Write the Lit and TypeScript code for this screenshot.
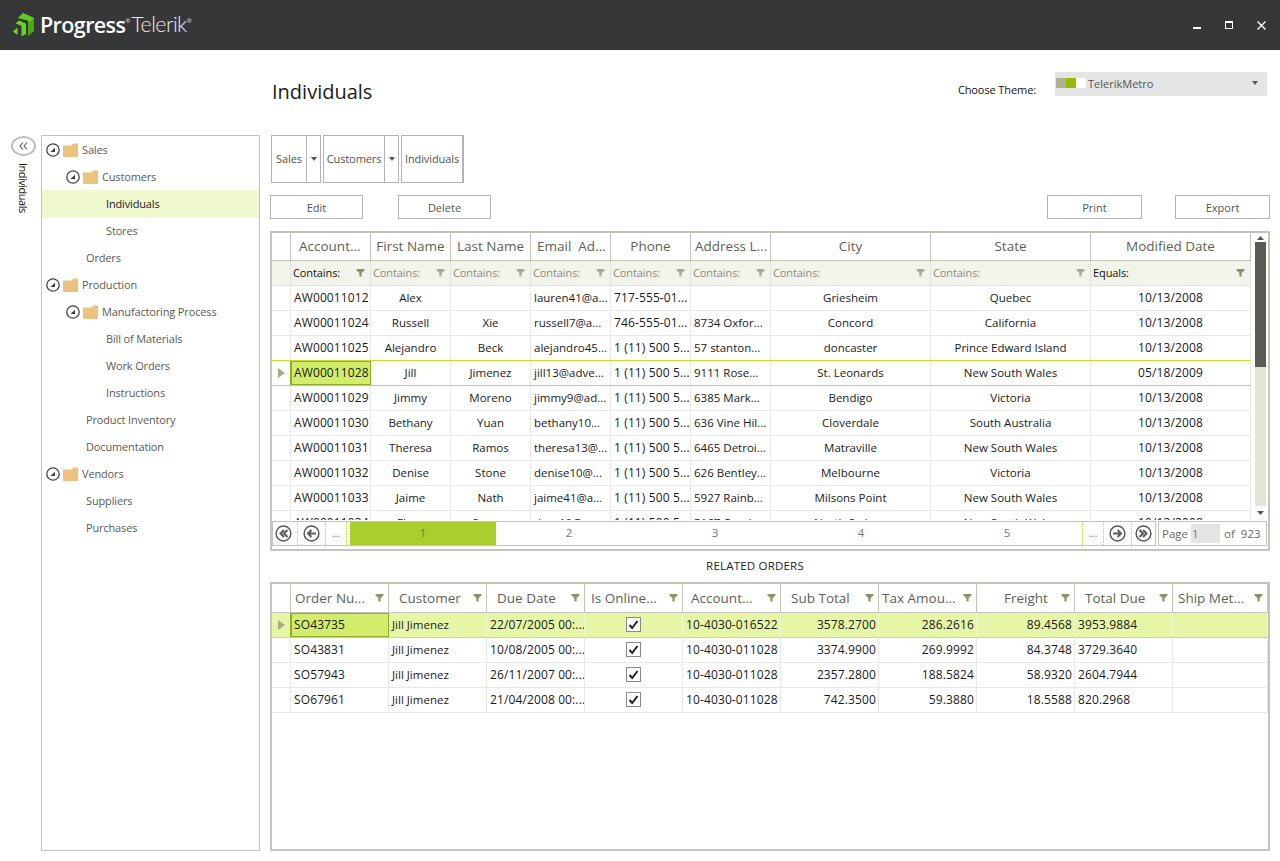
import { LitElement, html, css, svg } from "lit";
import { customElement } from "lit/decorators.js";

const TREE: [string, number, boolean, boolean?][] = [
  ["Sales", 0, true],
  ["Customers", 1, true],
  ["Individuals", 2, false, true],
  ["Stores", 2, false],
  ["Orders", 1, false],
  ["Production", 0, true],
  ["Manufactoring Process", 1, true],
  ["Bill of Materials", 2, false],
  ["Work Orders", 2, false],
  ["Instructions", 2, false],
  ["Product Inventory", 1, false],
  ["Documentation", 1, false],
  ["Vendors", 0, true],
  ["Suppliers", 1, false],
  ["Purchases", 1, false],
];

const COLS1: [string, number, string][] = [
  ["Account...", 80, "l8"], ["First Name", 80, "c"], ["Last Name", 80, "c"], ["Email  Ad...", 80, "l6"],
  ["Phone", 80, "c"], ["Address L...", 80, "l4"], ["City", 160, "c"], ["State", 160, "c"], ["Modified Date", 160, "c"],
];

const ROWS1: string[][] = [
  ["AW00011012", "Alex", "", "lauren41@a...", "717-555-01...", "", "Griesheim", "Quebec", "10/13/2008"],
  ["AW00011024", "Russell", "Xie", "russell7@a...", "746-555-01...", "8734 Oxfor...", "Concord", "California", "10/13/2008"],
  ["AW00011025", "Alejandro", "Beck", "alejandro45...", "1 (11) 500 5...", "57 stanton...", "doncaster", "Prince Edward Island", "10/13/2008"],
  ["AW00011028", "Jill", "Jimenez", "jill13@adve...", "1 (11) 500 5...", "9111 Rose...", "St. Leonards", "New South Wales", "05/18/2009"],
  ["AW00011029", "Jimmy", "Moreno", "jimmy9@ad...", "1 (11) 500 5...", "6385 Mark...", "Bendigo", "Victoria", "10/13/2008"],
  ["AW00011030", "Bethany", "Yuan", "bethany10...", "1 (11) 500 5...", "636 Vine Hil...", "Cloverdale", "South Australia", "10/13/2008"],
  ["AW00011031", "Theresa", "Ramos", "theresa13@...", "1 (11) 500 5...", "6465 Detroi...", "Matraville", "New South Wales", "10/13/2008"],
  ["AW00011032", "Denise", "Stone", "denise10@...", "1 (11) 500 5...", "626 Bentley...", "Melbourne", "Victoria", "10/13/2008"],
  ["AW00011033", "Jaime", "Nath", "jaime41@a...", "1 (11) 500 5...", "5927 Rainb...", "Milsons Point", "New South Wales", "10/13/2008"],
  ["AW00011034", "Fleur", "Suarez", "dora10@a...", "1 (11) 500 5...", "5167 Condo...", "North Sydney", "New South Wales", "10/13/2008"],
];

const COLS2: [string, number, string][] = [
  ["Order Nu...", 98, "l4"], ["Customer", 98, "l10"], ["Due Date", 98, "l10"], ["Is Online...", 98, "l6"], ["Account...", 98, "l8"],
  ["Sub Total", 98, "l10"], ["Tax Amou...", 98, "l3"], ["Freight", 98, "l26"], ["Total Due", 98, "l10"], ["Ship Met...", 95, "l5"],
];

const ROWS2: string[][] = [
  ["SO43735", "Jill Jimenez", "22/07/2005 00:...", "x", "10-4030-016522", "3578.2700", "286.2616", "89.4568", "3953.9884", ""],
  ["SO43831", "Jill Jimenez", "10/08/2005 00:...", "x", "10-4030-011028", "3374.9900", "269.9992", "84.3748", "3729.3640", ""],
  ["SO57943", "Jill Jimenez", "26/11/2007 00:...", "x", "10-4030-011028", "2357.2800", "188.5824", "58.9320", "2604.7944", ""],
  ["SO67961", "Jill Jimenez", "21/04/2008 00:...", "x", "10-4030-011028", "742.3500", "59.3880", "18.5588", "820.2968", ""],
];

const PAD2 = ["l", "l", "l", "c", "l", "r", "r", "r", "l", "l"];

const isNum = (v: string) => (v.match(/\d/g) || []).length / Math.max(v.length, 1) > 0.45;

const funnel = (active: boolean) => html`<svg class="funnel" width="9" height="9" viewBox="0 0 9 9"><path d="M0.5 1H8.5V2.5L5.6 5V8.5H3.4V5L0.5 2.5Z" fill=${active ? "#8c9464" : "#a8a8a8"}/></svg>`;

const expander = html`<svg class="exp" width="14" height="14" viewBox="0 0 14 14"><circle cx="7" cy="7" r="6.2" fill="#fff" stroke="#444" stroke-width="1.3"/><path d="M4.4 9H9V4.8Z" fill="#3c3c3c"/></svg>`;

const folder = html`<svg class="folder" width="15" height="14" viewBox="0 0 15 14"><path d="M0 2.6H8.5L10 .6H15V14H0Z" fill="#ebc27e"/></svg>`;

const pagerIcon = (d: string) => html`<svg width="17" height="17" viewBox="0 0 17 17"><circle cx="8.5" cy="8.5" r="7.4" fill="none" stroke="#5a5a5a" stroke-width="1.5"/>${svg`<path d=${d} fill="none" stroke="#5a5a5a" stroke-width="2"/>`}</svg>`;

const caret = html`<svg width="6" height="4" viewBox="0 0 6 4"><path d="M0 0H6L3 4Z" fill="#555"/></svg>`;

@customElement("app-root")
export class AppRoot extends LitElement {
  static styles = css`
    :host { display: block; width: 1280px; height: 861px; overflow: hidden; background: #fff; font-family: "Open Sans", "Noto Sans", sans-serif; font-size: 11px; color: #222; }
    * { box-sizing: border-box; }
    .titlebar { height: 50px; background: #363739; display: flex; align-items: center; padding: 0 0 0 12px; }
    .logo { display: flex; align-items: center; color: #fff; flex: 1; height: 50px; }
    .logo svg { margin-right: 4px; }
    .prog { font-family: "Open Sans", sans-serif; font-weight: 600; font-size: 21.5px; letter-spacing: -0.6px; line-height: 1; }
    .tele { font-family: "Lato", sans-serif; font-weight: 300; font-size: 21.5px; letter-spacing: -0.6px; line-height: 1; margin-left: 1px; color: #e8e8e8; }
    .reg { font-size: 6px; align-self: flex-start; margin-top: 17px; color: #ddd; }
    .winbtns { display: flex; align-items: center; padding-right: 3px; }
    .winbtn { width: 32px; height: 16px; display: flex; align-items: center; justify-content: center; }
    .body { display: flex; height: 811px; }
    .rail { width: 41px; padding: 86px 0 0 11px; }
    .collapse { width: 25px; height: 20px; border: 2px solid #bdbdb4; border-radius: 50%; display: flex; align-items: center; justify-content: center; }
    .railtext { writing-mode: vertical-rl; margin: 7px 0 0 4px; font-size: 11px; letter-spacing: -0.5px; color: #111; line-height: 16px; }
    .tree { width: 219px; height: 716px; margin-top: 85px; border: 1px solid #c4c4b8; padding-top: 1px; }
    .node { height: 27px; padding-bottom: 2px; display: flex; align-items: center; color: #5b5b52; white-space: nowrap; letter-spacing: -0.15px; }
    .node.sel { background: #f0f8d0; color: #1a1a1a; height: 28px; margin-top: -1px; padding-top: 1px; }
    .l0 { padding-left: 4px; }
    .l1 { padding-left: 24px; }
    .l2 { padding-left: 64px; }
    .l1.leaf { padding-left: 44px; }
    .exp { margin-right: 3px; flex: none; }
    .folder { margin-right: 4px; flex: none; }
    .main { width: 1000px; margin-left: 10px; display: flex; flex-direction: column; }
    .top { height: 85px; display: flex; }
    .title { font-size: 20px; color: #1a1a1a; padding: 27px 0 0 2px; line-height: 30px; flex: 1; }
    .theme-lbl { color: #111; padding-top: 32px; line-height: 15px; margin-right: 19px; letter-spacing: -0.1px; }
    .combo { margin: 22px 3px 0 0; width: 212px; height: 24px; background: #e4e4e4; display: flex; align-items: center; padding: 0 0 2px 1px; color: #555; }
    .sw { width: 10px; height: 10px; }
    .combo-txt { margin-left: 2px; flex: 1; }
    .combo .caretbox { margin-right: 9px; display: flex; }
    .crumbs { display: flex; height: 48px; margin-left: 1px; gap: 2px; }
    .crumb { display: flex; border: 1px solid #b4b4b4; color: #55554c; align-items: stretch; }
    .c1 { width: 50px; }
    .c2 { width: 76px; }
    .c3 { width: 63px; }
    .crumb span { display: flex; flex: 1; align-items: center; justify-content: center; padding-bottom: 2px; letter-spacing: -0.1px; }
    .crumb .dd { flex: none; padding: 0; width: 14px; border-left: 1px solid #b4b4b4; }
    .crumb.last { border-right-width: 2px; }
    .btns { display: flex; margin-top: 12px; height: 24px; }
    .btn { border: 1px solid #b4b4b4; color: #55554c; width: 93px; display: flex; align-items: center; justify-content: center; }
    .btn.wide { width: 95px; }
    .mr35 { margin-right: 35px; }
    .mr33 { margin-right: 33px; }
    .spacer { flex: 1; }
    .grid1 { margin-top: 12px; height: 320px; border: 2px solid #c4c4b8; display: flex; flex-direction: column; }
    .g1top { display: flex; height: 287px; }
    .g1data { width: 979px; flex: none; overflow: hidden; }
    .row { display: flex; }
    .hdr { height: 28px; border-bottom: 1px solid #c4c4b8; }
    .hcell { height: 100%; padding-bottom: 2px; border-right: 1px solid #c4c4b8; display: flex; align-items: center; font-size: 13.5px; color: #5f5f55; white-space: pre; overflow: hidden; position: relative; flex: none; }
    .hcell.c { justify-content: center; }
    .hcell.l3 { padding-left: 3px; }
    .hcell.l4 { padding-left: 4px; }
    .hcell.l5 { padding-left: 5px; }
    .hcell.l6 { padding-left: 6px; }
    .hcell.l8 { padding-left: 8px; }
    .hcell.l10 { padding-left: 10px; }
    .hcell.l26 { padding-left: 27px; }
    .indent { width: 19px; flex: none; border-right: 1px solid #c4c4b8; height: 100%; display: flex; align-items: center; justify-content: center; }
    .frow { height: 25px; background: #f2f3ea; border-bottom: 1px solid #e3e3e3; }
    .frow .indent { border-right: 1px solid #e3e3e3; }
    .fcell { height: 100%; flex: none; border-right: 1px solid #e3e3e3; display: flex; align-items: center; justify-content: space-between; padding: 0 5px 2px 2px; color: #8a8a80; font-size: 11px; letter-spacing: -0.1px; }
    .fcell.a { color: #111; }
    .drow { height: 25px; border-bottom: 1px solid #e8e8e8; }
    .drow .indent { border-right: 1px solid #e8e8e8; }
    .drow.cur { border-top: 1px solid #c6dc34; border-bottom: 1px solid #c6dc34; height: 26px; margin-top: -1px; }
    .cell { height: 100%; flex: none; padding-bottom: 2px; border-right: 1px solid #e8e8e8; display: flex; align-items: center; font-size: 11.5px; color: #1a1a1a; white-space: nowrap; overflow: hidden; }
    .cell.num { font-size: 12px; letter-spacing: 0.12px; }
    .cell.c { justify-content: center; }
    .cell.l { padding-left: 3px; }
    .cell.r { justify-content: flex-end; padding-right: 2px; }
    .cell.acc { background: #d2ec6c; outline: 1px solid #8cae22; outline-offset: -1px; box-shadow: -1px 0 0 #8cae22; overflow: visible; }
    .arrow { display: block; margin-bottom: 1px; }
    .scroll { width: 17px; display: flex; flex-direction: column; align-items: center; height: 100%; padding-left: 2px; }
    .sbtn { height: 9px; display: flex; align-items: center; justify-content: center; flex: none; }
    .sthumb { width: 11px; height: 125px; background: #5a5b53; flex: none; }
    .strack { width: 11px; flex: 1; background: #e3e4d4; }
    .sbot { height: 14px; }
    .pagerbar { display: flex; height: 25px; margin-top: 1px; }
    .pager { width: 884px; border: 1px solid #c4c4b8; display: flex; align-items: center; height: 25px; color: #777; }
    .pbtn { display: flex; align-items: center; justify-content: center; height: 100%; flex: none; padding-bottom: 1px; }
    .sep-r { border-right: 1px dotted #c6d458; }
    .sep-l { border-left: 1px dotted #c6d458; }
    .w25 { width: 25px; padding-right: 3px; }
    .w24 { width: 24px; }
    .w28 { width: 28px; }
    .w21 { width: 21px; color: #777; padding-bottom: 2px; }
    .gap3 { width: 3px; flex: none; }
    .gap2 { width: 2px; flex: none; }
    .page { width: 146px; flex: none; height: 100%; padding-bottom: 2px; display: flex; align-items: center; justify-content: center; color: #777; font-size: 11.5px; }
    .page.on { background: #aacd2f; color: #6f7f3a; }
    .pinfo { margin-left: 2px; width: 109px; height: 25px; border: 1px solid #c4c4b8; display: flex; align-items: center; color: #6a6a60; padding: 0 0 1px 3px; font-size: 11.5px; }
    .pinput { width: 29px; height: 19px; background: #e4e4e4; padding-left: 1px; margin-left: 3px; display: flex; align-items: center; color: #777; }
    .pof { margin-left: 4px; }
    .pnum { margin-left: 6px; }
    .related { height: 31px; padding: 0 30px 2px 0; display: flex; align-items: center; justify-content: center; font-size: 11.5px; letter-spacing: 0.2px; color: #222; }
    .grid2 { height: 269px; border: 2px solid #c4c4b8; }
    .grid2 .row.hdr { height: 29px; }
    .grid2 .hcell { padding-bottom: 1px; }
    .grid2 .cell { padding-bottom: 1px; }
    .filt { position: absolute; right: 4px; top: 9px; display: flex; }
    .grid2 .drow.cur { background: #e5f6a6; border-top: none; border-bottom: 1px solid #cde04a; height: 25px; margin-top: 0; }
    .grid2 .cur .cell { border-right-color: #f0f9cc; }
    .grid2 .cur .cell.acc { border-right-color: #8cae22; }
    .cbx { width: 15px; height: 15px; border: 1px solid #8a8a8a; background: #fff; display: flex; align-items: center; justify-content: center; }
  `;

  private _tree() {
    return TREE.map(([t, lvl, exp, sel]) => html`<div class="node l${lvl} ${exp ? "" : "leaf"} ${sel ? "sel" : ""}">
      ${exp ? expander : ""}${exp ? folder : ""}${t}</div>`);
  }

  private _grid1() {
    return html`<div class="grid1">
      <div class="g1top">
        <div class="g1data">
          <div class="row hdr"><div class="indent"></div>
            ${COLS1.map(([t, w, a]) => html`<div class="hcell ${a}" style="width:${w}px">${t}</div>`)}
          </div>
          <div class="row frow"><div class="indent"></div>
            ${COLS1.map(([, w], i) => {
              const active = i === 0 || i === 8;
              return html`<div class="fcell ${active ? "a" : ""}" style="width:${w}px"><span>${i === 8 ? "Equals:" : "Contains:"}</span>${funnel(active)}</div>`;
            })}
          </div>
          ${ROWS1.map((r, ri) => html`<div class="row drow ${ri === 3 ? "cur" : ""}">
            <div class="indent">${ri === 3 ? html`<svg class="arrow" width="7" height="10" viewBox="0 0 7 10"><path d="M0 0L7 5L0 10Z" fill="#a8ad86"/></svg>` : ""}</div>
            ${r.map((v, i) => html`<div class="cell ${[0, 3, 4, 5].includes(i) ? "l" : "c"} ${isNum(v) ? "num" : ""} ${ri === 3 && i === 0 ? "acc" : ""}" style="width:${COLS1[i][1]}px">${v}</div>`)}
          </div>`)}
        </div>
        <div class="scroll">
          <div class="sbtn"><svg width="7" height="4" viewBox="0 0 7 4"><path d="M0 4H7L3.5 0Z" fill="#555"/></svg></div>
          <div class="sthumb"></div>
          <div class="strack"></div>
          <div class="sbtn sbot"><svg width="7" height="4" viewBox="0 0 7 4"><path d="M0 0H7L3.5 4Z" fill="#555"/></svg></div>
        </div>
      </div>
      <div class="pagerbar">
        <div class="pager">
          <div class="pbtn w25 sep-r">${pagerIcon("M9 5L5.5 8.5L9 12M12.5 5L9 8.5L12.5 12")}</div>
          <div class="pbtn w28 sep-r">${pagerIcon("M8.5 5L5 8.5L8.5 12M5 8.5H13")}</div>
          <div class="pbtn w21 sep-r">...</div>
          <div class="gap3"></div>
          ${["1", "2", "3", "4", "5"].map((p, i) => html`<div class="page ${i === 0 ? "on" : ""}">${p}</div>`)}
          <div class="gap2"></div>
          <div class="pbtn w21 sep-l">...</div>
          <div class="pbtn w28 sep-l">${pagerIcon("M8.5 5L12 8.5L8.5 12M4 8.5H12")}</div>
          <div class="pbtn w24 sep-l">${pagerIcon("M4.5 5L8 8.5L4.5 12M8 5L11.5 8.5L8 12")}</div>
        </div>
        <div class="pinfo">Page<div class="pinput">1</div><span class="pof">of</span><span class="pnum">923</span></div>
      </div>
    </div>`;
  }

  private _grid2() {
    return html`<div class="grid2">
      <div class="row hdr"><div class="indent"></div>
        ${COLS2.map(([t, w, a]) => html`<div class="hcell ${a}" style="width:${w}px">${t}<span class="filt">${funnel(true)}</span></div>`)}
      </div>
      ${ROWS2.map((r, ri) => html`<div class="row drow ${ri === 0 ? "cur" : ""}">
        <div class="indent">${ri === 0 ? html`<svg class="arrow" width="7" height="10" viewBox="0 0 7 10"><path d="M0 0L7 5L0 10Z" fill="#a8ad86"/></svg>` : ""}</div>
        ${r.map((v, i) => html`<div class="cell ${PAD2[i]} ${isNum(v) ? "num" : ""} ${ri === 0 && i === 0 ? "acc" : ""}" style="width:${COLS2[i][1]}px">
          ${v === "x" ? html`<div class="cbx"><svg width="11" height="11" viewBox="0 0 11 11"><path d="M1.5 6L4.2 9L9.5 2" fill="none" stroke="#222" stroke-width="2"/></svg></div>` : v}</div>`)}
      </div>`)}
    </div>`;
  }

  render() {
    return html`
      <div class="titlebar">
        <div class="logo">
          <svg width="24" height="24" viewBox="0 0 24 24"><path d="M6 5L11 0L22 5V18L16 23V7.5Z" fill="#4aa812"/><path d="M6 5L11 0L22 5L17 9.5L16 7.5Z" fill="#62cc1a"/><path d="M3.5 10.5L7 7.5L14 10.8V21L9.5 23.5V12.8Z" fill="#6cd41e"/><path d="M1 18.5L5.5 14.5V22Z" fill="#74d824"/></svg>
          <span class="prog">Progress</span><span class="reg">®</span><span class="tele">Telerik</span><span class="reg">®</span>
        </div>
        <div class="winbtns">
          <div class="winbtn"><svg width="10" height="10" viewBox="0 0 10 10"><rect x="1" y="7" width="8" height="2" fill="#fff"/></svg></div>
          <div class="winbtn"><svg width="10" height="10" viewBox="0 0 10 10"><rect x="1.5" y="1.5" width="7" height="7" fill="none" stroke="#fff"/><rect x="1" y="1" width="8" height="2" fill="#fff"/></svg></div>
          <div class="winbtn"><svg width="11" height="11" viewBox="0 0 11 11"><path d="M1.5 1.5L9.5 9.5M9.5 1.5L1.5 9.5" stroke="#fff" stroke-width="1.4"/></svg></div>
        </div>
      </div>
      <div class="body">
        <div class="rail">
          <div class="collapse"><svg width="9" height="8" viewBox="0 0 9 8"><path d="M4 .5L1 4L4 7.5M8 .5L5 4L8 7.5" fill="none" stroke="#555" stroke-width="1.1"/></svg></div>
          <div class="railtext">Individuals</div>
        </div>
        <div class="tree">${this._tree()}</div>
        <div class="main">
          <div class="top">
            <div class="title">Individuals</div>
            <div class="theme-lbl">Choose Theme:</div>
            <div class="combo">
              <div class="sw" style="background:#aeb28e"></div><div class="sw" style="background:#98bb08"></div><div class="sw" style="background:#fff"></div>
              <div class="combo-txt">TelerikMetro</div>
              <div class="caretbox">${caret}</div>
            </div>
          </div>
          <div class="crumbs">
            <div class="crumb c1"><span>Sales</span><span class="dd">${caret}</span></div>
            <div class="crumb c2"><span>Customers</span><span class="dd">${caret}</span></div>
            <div class="crumb c3 last"><span>Individuals</span></div>
          </div>
          <div class="btns">
            <div class="btn mr35">Edit</div>
            <div class="btn">Delete</div>
            <div class="spacer"></div>
            <div class="btn wide mr33">Print</div>
            <div class="btn wide">Export</div>
          </div>
          ${this._grid1()}
          <div class="related">RELATED ORDERS</div>
          ${this._grid2()}
        </div>
      </div>`;
  }
}
